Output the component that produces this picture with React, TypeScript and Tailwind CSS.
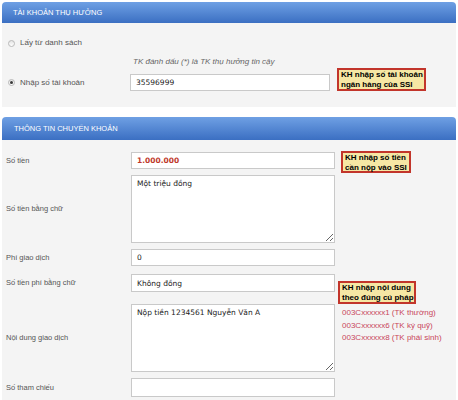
import React from "react";

function Radio({ checked }: { checked?: boolean }) {
  return (
    <span className="w-[7px] h-[7px] rounded-full border border-[#b9b9b9] bg-gradient-to-b from-[#e4e4e4] to-[#ffffff] flex items-center justify-center shrink-0">
      {checked ? <span className="w-[3px] h-[3px] rounded-full bg-[#3a3a3a]" /> : null}
    </span>
  );
}

function Note({ lines, className }: { lines: string[]; className: string }) {
  return (
    <div
      className={
        "absolute border-2 border-[#c2352b] bg-[#f6e7a4] pl-[2px] pt-[0px] text-[8px] leading-[10px] font-bold text-black font-['Liberation_Sans',Arial,sans-serif] " +
        className
      }
    >
      {lines.map((l) => (
        <div key={l}>{l}</div>
      ))}
    </div>
  );
}

const inputCls =
  "bg-white border border-[#c9c9c9] px-[5px] text-[7.5px] text-[#222] font-['DejaVu_Sans',Verdana,sans-serif] outline-none";

export default function App() {
  return (
    <div className="relative w-[458px] h-[400px] overflow-hidden bg-white px-[2px] pt-[2px] font-['Liberation_Sans',Arial,sans-serif]">
      {/* Panel 1 */}
      <div className="rounded-t-[4px] h-[21px] bg-gradient-to-b from-[#6fa0e4] to-[#3b6fc2] flex items-center pl-[11px] text-white text-[7.5px]">
        TÀI KHOẢN THỤ HƯỞNG
      </div>
      <div className="bg-[#f4f4f4] h-[84px] pt-[14px] flex flex-col">
        <div className="h-[12px] flex items-center pl-[6px] gap-[5px] text-[8px] text-[#555]">
          <Radio />
          <span>Lấy từ danh sách</span>
        </div>
        <div className="h-[12px] mt-[7px] flex items-center pl-[131px] text-[8px] italic text-[#666]">
          TK đánh dấu (*) là TK thụ hưởng tin cậy
        </div>
        <div className="h-[17px] mt-[6px] flex items-center">
          <div className="w-[128px] flex items-center pl-[6px] gap-[5px] text-[8px] text-[#555]">
            <Radio checked />
            <span>Nhập số tài khoản</span>
          </div>
          <input readOnly defaultValue="35596999" className={inputCls + " w-[200px] h-[17px]"} />
        </div>
      </div>

      <div className="h-[10px]" />

      {/* Panel 2 */}
      <div className="rounded-t-[4px] h-[23px] bg-gradient-to-b from-[#6fa0e4] to-[#3b6fc2] flex items-center pl-[12px] text-white text-[7.5px]">
        THÔNG TIN CHUYỂN KHOẢN
      </div>
      <div className="bg-[#f4f4f4] h-[300px] pt-[12px] flex flex-col text-[7.5px] text-[#555]">
        <div className="h-[17px] flex items-center">
          <div className="w-[129px] pl-[4px]">Số tiền</div>
          <input
            readOnly
            defaultValue="1.000.000"
            className={inputCls + " w-[204px] h-[17px] font-bold !text-[#c0392b]"}
          />
        </div>
        <div className="h-[68px] mt-[6px] flex items-center">
          <div className="w-[129px] pl-[4px]">Số tiền bằng chữ</div>
          <textarea
            readOnly
            defaultValue="Một triệu đồng"
            className={inputCls + " w-[204px] h-[68px] py-[3px] leading-[10px] resize"}
          />
        </div>
        <div className="h-[17px] mt-[6px] flex items-center">
          <div className="w-[129px] pl-[4px]">Phí giao dịch</div>
          <input readOnly defaultValue="0" className={inputCls + " w-[204px] h-[17px]"} />
        </div>
        <div className="h-[18px] mt-[8px] flex items-center">
          <div className="w-[129px] pl-[4px]">Số tiền phí bằng chữ</div>
          <input readOnly defaultValue="Không đồng" className={inputCls + " w-[204px] h-[18px]"} />
        </div>
        <div className="h-[68px] mt-[12px] flex items-center">
          <div className="w-[129px] pl-[4px]">Nội dung giao dịch</div>
          <textarea
            readOnly
            defaultValue="Nộp tiền 1234561 Nguyễn Văn A"
            className={inputCls + " w-[204px] h-[68px] py-[3px] leading-[10px] resize"}
          />
          <div className="self-start pt-[3px] pl-[7px] text-[8px] leading-[12.5px] text-[#c9475c]">
            <div>003Cxxxxxx1 (TK thường)</div>
            <div>003Cxxxxxx6 (TK ký quỹ)</div>
            <div>003Cxxxxxx8 (TK phái sinh)</div>
          </div>
        </div>
        <div className="h-[19px] mt-[6px] flex items-center">
          <div className="w-[129px] pl-[4px]">Số tham chiếu</div>
          <input readOnly defaultValue="" className={inputCls + " w-[204px] h-[19px]"} />
        </div>
      </div>

      {/* Callout annotations */}
      <Note className="left-[337px] top-[68px] w-[89px] h-[23px]" lines={["KH nhập số tài khoản", "ngân hàng của SSI"]} />
      <Note className="left-[341px] top-[151px] w-[70px] h-[22px]" lines={["KH nhập số tiền", "cần nộp vào SSI"]} />
      <Note className="left-[338px] top-[281px] w-[78px] h-[23px]" lines={["KH nhập nội dung", "theo đúng cú pháp"]} />
    </div>
  );
}
